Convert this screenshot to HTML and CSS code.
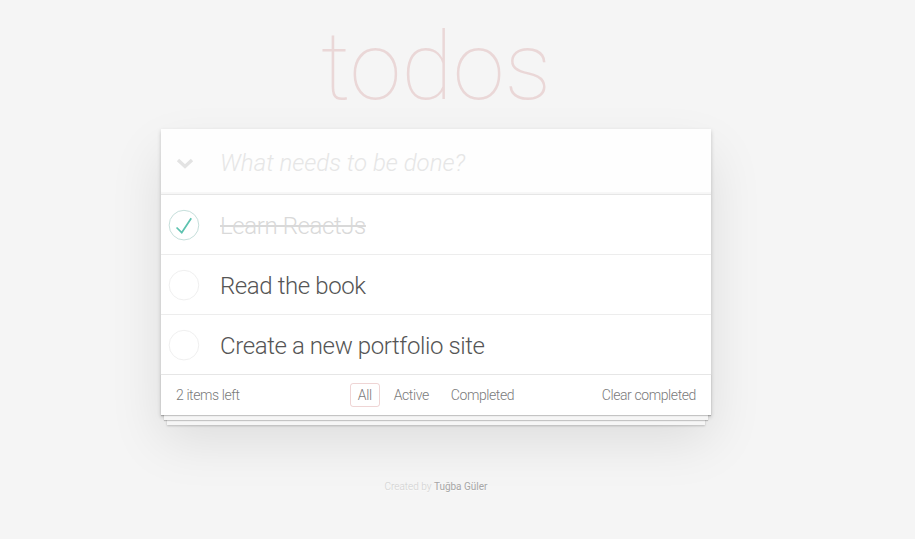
FILE: index.html
```html
<!DOCTYPE html>
<html lang="en">
<head>
<meta charset="utf-8">
<title>todos</title>
<link rel="stylesheet" href="styles.css">
</head>
<body>
<div class="page">
  <h1 class="title">todos</h1>
  <section class="todoapp">
    <header class="new-row">
      <span class="toggle-all">
        <svg width="18" height="12" viewBox="0 0 18 12"><path d="M2 2 L9 8.5 L16 2" fill="none" stroke="#e3e3e3" stroke-width="3.4" stroke-linejoin="miter"/></svg>
      </span>
      <input class="new-todo" type="text" placeholder="What needs to be done?">
    </header>
    <ul class="list">
      <li class="item done">
        <svg class="check" width="40" height="40" viewBox="-10 -18 100 135"><circle cx="50" cy="50" r="50" fill="none" stroke="#bddad5" stroke-width="3"/><path fill="#5dc2af" d="M72 25L42 71 27 56l-4 4 20 20 34-52z"/></svg>
        <span class="label">Learn ReactJs</span>
      </li>
      <li class="item">
        <svg class="check" width="40" height="40" viewBox="-10 -18 100 135"><circle cx="50" cy="50" r="50" fill="none" stroke="#ededed" stroke-width="3"/></svg>
        <span class="label">Read the book</span>
      </li>
      <li class="item">
        <svg class="check" width="40" height="40" viewBox="-10 -18 100 135"><circle cx="50" cy="50" r="50" fill="none" stroke="#ededed" stroke-width="3"/></svg>
        <span class="label">Create a new portfolio site</span>
      </li>
    </ul>
    <footer class="footer">
      <span class="count">2 items left</span>
      <ul class="filters">
        <li><a class="selected" href="#">All</a></li>
        <li><a href="#">Active</a></li>
        <li><a href="#">Completed</a></li>
      </ul>
      <a class="clear" href="#">Clear completed</a>
    </footer>
  </section>
  <footer class="info">Created by <a href="#">Tuğba Güler</a></footer>
</div>
</body>
</html>
```
FILE: styles.css
```css
html, body {
  margin: 0;
  padding: 0;
}

body {
  background: #f5f5f5;
  color: #4d4d4d;
  font-family: Roboto, "Liberation Sans", sans-serif;
  font-weight: 300;
  font-size: 14px;
  line-height: 1.4em;
}

.page {
  width: 550px;
  margin-left: 161px;
}

.title {
  margin: 0;
  padding-top: 20px;
  height: 94px;
  margin-bottom: 15px;
  font-size: 94px;
  line-height: 94px;
  font-weight: 100;
  text-align: center;
  color: rgba(175, 47, 47, 0.15);
}

.todoapp {
  background: #fff;
  box-shadow: 0 2px 4px 0 rgba(0, 0, 0, 0.2), 0 25px 50px 0 rgba(0, 0, 0, 0.1);
}

.new-row {
  display: flex;
  align-items: center;
  height: 65px;
  background: rgba(0, 0, 0, 0.003);
  box-shadow: inset 0 -2px 1px rgba(0, 0, 0, 0.03);
}

.toggle-all {
  width: 48px;
  flex: none;
  display: flex;
  justify-content: center;
  padding-top: 5px;
}

.new-todo {
  flex: 1;
  min-width: 0;
  border: 0;
  outline: 0;
  background: transparent;
  padding: 4px 16px 0 11px;
  font-family: inherit;
  font-size: 24px;
  font-weight: 300;
  font-style: italic;
  line-height: 1.4em;
  color: #4d4d4d;
}

.new-todo::placeholder {
  color: #e6e6e6;
  font-style: italic;
  font-weight: 300;
}

.list {
  list-style: none;
  margin: 0;
  padding: 0;
  border-top: 1px solid #e6e6e6;
}

.item {
  display: flex;
  align-items: center;
  height: 59px;
  border-bottom: 1px solid #ededed;
  font-size: 24px;
}

.item:last-child {
  border-bottom: 0;
}

.check {
  flex: none;
  display: block;
}

.label {
  padding-left: 19px;
  padding-top: 3px;
  line-height: 1.2;
  letter-spacing: -0.4px;
  color: #555;
}

.done .label {
  color: #d9d9d9;
  text-decoration: line-through;
}

.footer {
  display: grid;
  grid-template-columns: 1fr auto 1fr;
  align-items: center;
  height: 20px;
  padding: 10px 15px;
  color: #7a7a7a;
  letter-spacing: -0.4px;
  border-top: 1px solid #e6e6e6;
  box-shadow: 0 1px 1px rgba(0, 0, 0, 0.2),
    0 8px 0 -3px #f6f6f6,
    0 9px 1px -3px rgba(0, 0, 0, 0.2),
    0 16px 0 -6px #f6f6f6,
    0 17px 2px -6px rgba(0, 0, 0, 0.2);
}

.count {
  justify-self: start;
  padding-top: 1px;
}

.filters {
  display: flex;
  list-style: none;
  margin: 0;
  padding: 1px 0 0 0;
}

.filters a {
  color: inherit;
  margin: 3px;
  padding: 3px 7px;
  text-decoration: none;
  border: 1px solid transparent;
  border-radius: 3px;
}

.filters a.selected {
  border-color: rgba(175, 47, 47, 0.2);
}

.clear {
  justify-self: end;
  padding-top: 1px;
  color: inherit;
  text-decoration: none;
}

.info {
  margin-top: 65px;
  text-align: center;
  font-size: 10px;
  line-height: 14px;
  color: #cfcfcf;
  text-shadow: 0 1px 0 rgba(255, 255, 255, 0.5);
}

.info a {
  color: #a6a6a6;
  text-decoration: none;
  font-weight: 400;
}
```
